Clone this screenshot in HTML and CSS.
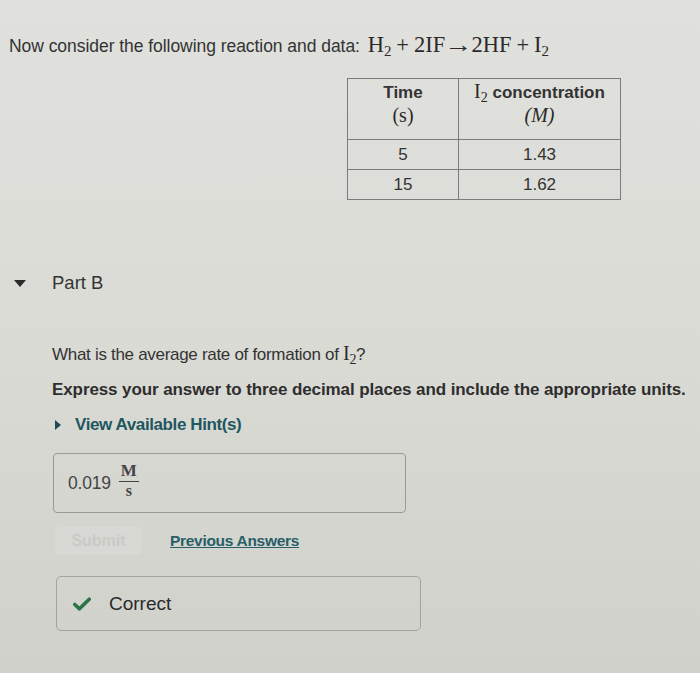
FILE: index.html
```html
<!DOCTYPE html>
<html>
<head>
<meta charset="utf-8">
<link rel="stylesheet" href="styles.css">
</head>
<body>
<div class="page">
  <p class="intro">Now consider the following reaction and data: <span class="math eq">H<sub>2</sub><span class="op">+</span>2IF<span class="arr">→</span>2HF<span class="op">+</span>I<sub>2</sub></span></p>
  <div class="table-wrap">
    <table class="data">
      <tr class="head">
        <td class="c1">Time<br><span class="math">(s)</span></td>
        <td class="c2"><span class="math">I<sub>2</sub></span> concentration<br><span class="math"><i>(M)</i></span></td>
      </tr>
      <tr><td>5</td><td>1.43</td></tr>
      <tr><td>15</td><td>1.62</td></tr>
    </table>
  </div>

  <div class="part">
    <span class="tri"></span>
    <span class="part-title">Part B</span>
  </div>

  <div class="question">
    <p class="q">What is the average rate of formation of <span class="math">I<sub>2</sub></span>?</p>
    <p class="instr">Express your answer to three decimal places and include the appropriate units.</p>
    <p class="hint"><span class="htri"></span>View Available Hint(s)</p>

    <div class="answer">
      <span class="val">0.019</span>
      <span class="frac"><span class="num">M</span><span class="den">s</span></span>
    </div>

    <div class="actions">
      <span class="submit">Submit</span>
      <span class="prev">Previous Answers</span>
    </div>

    <div class="correct">
      <svg class="check" width="18" height="14" viewBox="0 0 18 14"><path d="M1.8 7.5 L6.5 11.8 L16.2 2.2" fill="none" stroke="#2d7348" stroke-width="3.6" stroke-linecap="round" stroke-linejoin="round"/></svg>
      <span>Correct</span>
    </div>
  </div>
</div>
</body>
</html>
```
FILE: styles.css
```css
html, body {
  margin: 0;
  padding: 0;
}
body {
  width: 700px;
  height: 673px;
  overflow: hidden;
  background: linear-gradient(180deg, #e0e1dd 0%, #dbdbd6 50%, #d1d1cc 100%);
  font-family: "Liberation Sans", Arial, sans-serif;
  color: #2c2c2c;
}
.page {
  padding: 32px 0 0 9px;
}
p { margin: 0; }
.math {
  font-family: "Liberation Serif", "Times New Roman", serif;
  font-size: 20px;
  color: #2a2a2a;
}
.math sub {
  font-size: 14px;
  vertical-align: -4px;
  line-height: 0;
}
.eq {
  font-size: 22.5px;
  margin-left: 3px;
}
.eq sub { font-size: 15px; }
.op { margin: 0 5px; }
.arr { display: inline-block; transform: scaleX(1.25); margin: 0 2px; }
.intro {
  font-size: 17.5px;
  letter-spacing: -0.05px;
  color: #333;
  line-height: 26px;
}
.table-wrap {
  display: flex;
  justify-content: flex-start;
  padding-left: 338px;
  margin-top: 19px;
}
.data {
  border-collapse: collapse;
  font-size: 17px;
  color: #333;
}
.data td {
  border: 1.5px solid #7b7b7b;
  text-align: center;
  height: 29px;
  padding: 0;
}
.data .head td {
  height: 61px;
  font-weight: bold;
  line-height: 23px;
  vertical-align: middle;
  padding-bottom: 10px;
  box-sizing: border-box;
  color: #333;
}
.data .head .math { font-weight: normal; font-size: 20px; }
.data .c1 { width: 111px; }
.data .c2 { width: 162px; }
.part {
  display: flex;
  align-items: center;
  margin-top: 72px;
  padding-left: 5px;
}
.tri {
  width: 0; height: 0;
  border-left: 6px solid transparent;
  border-right: 6px solid transparent;
  border-top: 7px solid #2a2a2a;
}
.part-title {
  margin-left: 26px;
  font-size: 18.5px;
  color: #333;
}
.question {
  padding-left: 43px;
  margin-top: 47px;
}
.q {
  font-size: 17px;
  letter-spacing: -0.3px;
  color: #333;
  line-height: 24px;
}
.instr {
  margin-top: 11px;
  font-size: 17px;
  font-weight: bold;
  color: #2e2e2e;
  line-height: 24px;
  letter-spacing: -0.1px;
}
.hint {
  margin-top: 11px;
  font-size: 17px;
  line-height: 24px;
  color: #1e5760;
  display: flex;
  align-items: center;
  letter-spacing: -0.4px;
  font-weight: bold;
}
.htri {
  width: 0; height: 0;
  border-top: 5px solid transparent;
  border-bottom: 5px solid transparent;
  border-left: 6px solid #1f4a55;
  margin: 0 14px 0 3px;
}
.answer {
  margin-top: 16px;
  margin-left: 1px;
  width: 353px;
  height: 60px;
  border: 1.5px solid #9a9a98;
  border-radius: 4px;
  display: flex;
  align-items: center;
  padding-left: 14px;
  box-sizing: border-box;
}
.val {
  font-size: 17.5px;
  color: #444;
  margin-right: 8px;
  letter-spacing: -0.2px;
}
.frac {
  display: inline-flex;
  flex-direction: column;
  align-items: center;
  font-family: "Liberation Serif", "Times New Roman", serif;
  font-weight: bold;
  color: #444;
  margin-top: -4px;
}
.frac .num {
  font-size: 17px;
  line-height: 16px;
  border-bottom: 1.5px solid #444;
  padding: 0 2px 2px;
}
.frac .den {
  font-size: 16px;
  line-height: 17px;
}
.actions {
  display: flex;
  align-items: center;
  margin-top: 14px;
  margin-left: 3px;
}
.submit {
  width: 87px;
  height: 28px;
  border-radius: 3px;
  background: #d8d8d4;
  color: #cacac6;
  font-size: 16px;
  font-weight: bold;
  display: flex;
  align-items: center;
  justify-content: center;
}
.prev {
  margin-left: 28px;
  font-size: 15.5px;
  font-weight: bold;
  color: #285e68;
  text-decoration: underline;
  letter-spacing: -0.3px;
}
.correct {
  margin-top: 21px;
  margin-left: 4px;
  width: 365px;
  height: 55px;
  border: 1.5px solid #a3a3a0;
  border-radius: 5px;
  box-sizing: border-box;
  display: flex;
  align-items: center;
  padding-left: 16px;
  font-size: 19px;
  color: #2a2a2a;
}
.check { margin-right: 18px; }
```
